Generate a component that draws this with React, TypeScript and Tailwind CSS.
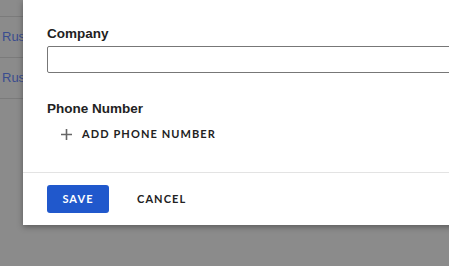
import React from 'react';

const rows = ['Russell', 'Russo'];

function Backdrop() {
  return (
    <div className="absolute inset-0 bg-[#8b8b8b]">
      <div className="h-[17px] border-b border-[#7b7b7b]" />
      {rows.map((name) => (
        <div
          key={name}
          className="flex h-[41px] items-center border-b border-[#7b7b7b] pl-[2px] text-[13px] text-[#3a4d8f]"
          style={{ fontFamily: '"Liberation Sans", Arial, sans-serif' }}
        >
          {name}
        </div>
      ))}
    </div>
  );
}

function PlusIcon() {
  return (
    <svg width="13" height="13" viewBox="0 0 13 13" className="text-[#666]">
      <path d="M6.5 1v11M1 6.5h11" stroke="currentColor" strokeWidth="1.6" />
    </svg>
  );
}

export default function App() {
  return (
    <div className="relative h-[266px] w-[449px] overflow-hidden">
      <Backdrop />
      <div
        className="absolute left-[23px] top-0 flex w-[520px] flex-col bg-white shadow-[0_2px_6px_rgba(0,0,0,0.35)]"
        style={{ fontFamily: '"Liberation Sans", Arial, sans-serif' }}
      >
        <div className="flex flex-col px-6 pt-[26px] pb-[28px]">
          <label className="mb-[4px] text-[13.5px] font-bold leading-4 text-[#222]">Company</label>
          <input className="h-[27px] w-full rounded-[2px] border border-[#777] bg-white px-2 text-[13px] outline-none" />
          <div className="mt-[28px] text-[13.5px] font-bold leading-4 text-[#222]">Phone Number</div>
          <button
            className="mt-[7px] flex h-5 items-center gap-[9px] pl-[13px] text-[11px] font-bold tracking-[0.1em] text-[#222]"
            style={{ fontFamily: 'Lato, "Open Sans", sans-serif' }}
          >
            <PlusIcon />
            ADD PHONE NUMBER
          </button>
        </div>
        <div className="flex items-center gap-[28px] border-t border-[#e3e3e3] px-6 py-3">
          <button
            className="h-[28px] w-[62px] rounded-[3px] bg-[#2058cc] text-[11px] font-bold tracking-[0.1em] text-white"
            style={{ fontFamily: 'Lato, "Open Sans", sans-serif' }}
          >
            SAVE
          </button>
          <button
            className="text-[11px] font-bold tracking-[0.1em] text-[#222]"
            style={{ fontFamily: 'Lato, "Open Sans", sans-serif' }}
          >
            CANCEL
          </button>
        </div>
      </div>
    </div>
  );
}
